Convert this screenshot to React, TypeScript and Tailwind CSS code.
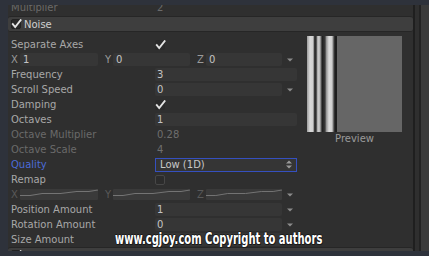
import React from "react";

function Arrow() {
  return (
    <div className="w-[15px] h-full flex items-center justify-center">
      <svg width="6" height="4" viewBox="0 0 6 4">
        <path d="M0 0.5 H6 L3 3.5 Z" fill="#8c8c8c" />
      </svg>
    </div>
  );
}

function CheckMark() {
  return (
    <svg width="11" height="10" viewBox="0 0 11 10" className="absolute left-0 top-0">
      <path d="M1.8 5.2 L4.2 8 L9.6 1.2" fill="none" stroke="#e2e2e2" strokeWidth="1.9" strokeLinecap="square" />
    </svg>
  );
}

function CheckBox({ checked, dim }: { checked?: boolean; dim?: boolean }) {
  return (
    <div
      className={
        "relative w-[10px] h-[10px] rounded-[2px] " +
        (dim ? "border border-[#474747] bg-[#2c2c2c]" : "bg-[#2a2a2a]")
      }
    >
      {checked ? <CheckMark /> : null}
    </div>
  );
}

function Field({ value, w, dim }: { value: string; w: string; dim?: boolean }) {
  return (
    <div className={"h-[13px] bg-[#363636] rounded-[2px] pl-[2px] flex items-center " + w}>
      <span className={dim ? "text-[#6e6e6e]" : "text-[#c4c4c4]"}>{value}</span>
    </div>
  );
}

function Row({
  label,
  dim,
  blue,
  children,
}: {
  label: string;
  dim?: boolean;
  blue?: boolean;
  children?: React.ReactNode;
}) {
  const color = blue ? "text-[#4b6bd8]" : dim ? "text-[#6a6a6a]" : "text-[#a8a8a8]";
  return (
    <div className="flex h-[15px] items-center">
      <div className={"w-[144px] whitespace-nowrap " + color}>{label}</div>
      <div className="w-[142px] h-full flex items-center">{children}</div>
    </div>
  );
}

function Curve() {
  return (
    <svg width="100%" height="11" viewBox="0 0 77 11" preserveAspectRatio="none">
      <polyline
        points="0,6.5 10,6.5 22,4.5 40,4.5 56,2.5 68,2.5 77,1"
        fill="none"
        stroke="#747474"
        strokeWidth="1"
      />
    </svg>
  );
}

function Triple({ curves }: { curves?: boolean }) {
  const lab = curves ? "text-[#595959]" : "text-[#9a9a9a]";
  const fieldCls = curves
    ? "h-[11px] bg-[#3a3a3a] rounded-[1px] flex items-center overflow-hidden"
    : "h-[13px] bg-[#363636] rounded-[2px] pl-[3px] flex items-center";
  const vals = ["1", "0", "0"];
  const labels = ["X", "Y", "Z"];
  const lw = ["w-[9px]", "w-[8px]", "w-[9px]"];
  const fw = ["w-[78px]", "w-[77px]", "w-[76px]"];
  return (
    <div className="flex h-[15px] items-center">
      {[0, 1, 2].map((i) => (
        <React.Fragment key={i}>
          <div className={"whitespace-nowrap " + lw[i] + " " + lab}>{labels[i]}</div>
          <div className={fieldCls + " " + fw[i]}>
            {curves ? <Curve /> : <span className="text-[#c4c4c4]">{vals[i]}</span>}
          </div>
          {i < 2 ? <div className="w-[7px]" /> : null}
        </React.Fragment>
      ))}
      <Arrow />
    </div>
  );
}

function Header({ label }: { label: string }) {
  return (
    <div className="h-[16px] shrink-0 bg-[#3e3e3e] border-y border-[#262626] rounded-[3px] flex items-center pl-[3px]">
      <div className="relative w-[10px] h-[10px] rounded-[2px] bg-[#2b2b2b] border border-[#222]">
        <svg width="11" height="10" viewBox="0 0 11 10" className="absolute -left-[1px] -top-[1px]">
          <path d="M1.8 5.2 L4.2 8 L9.6 1.2" fill="none" stroke="#e6e6e6" strokeWidth="1.9" strokeLinecap="square" />
        </svg>
      </div>
      <span className="ml-[3px] text-[#d0d0d0]">{label}</span>
    </div>
  );
}

export default function App() {
  return (
    <div className="relative w-[429px] h-[256px] bg-[#2e323b] pt-[5px] overflow-hidden font-['DejaVu_Sans',sans-serif] text-[10px] leading-[15px]">
      <div className="flex h-[246px]">
        <div className="w-[8px]" />
        <div className="w-[405px] h-full bg-[#2f2f2f] overflow-hidden flex flex-col">
          {/* Multiplier (cut off) */}
          <div className="h-[11px] overflow-hidden shrink-0">
            <div className="-mt-[5px] flex h-[15px] items-center pl-[3px]">
              <div className="w-[144px] text-[#6a6a6a]">Multiplier</div>
              <div className="pl-[2px] text-[#6a6a6a]">2</div>
            </div>
          </div>
          <Header label="Noise" />
          <div className="flex pt-[5px] shrink-0">
            <div className="w-[289px] pl-[3px] flex flex-col">
              <Row label="Separate Axes">
                <CheckBox checked />
              </Row>
              <Triple />
              <Row label="Frequency">
                <Field value="3" w="w-[142px]" />
              </Row>
              <Row label="Scroll Speed">
                <Field value="0" w="w-[127px]" />
                <Arrow />
              </Row>
              <Row label="Damping">
                <CheckBox checked />
              </Row>
              <Row label="Octaves">
                <Field value="1" w="w-[142px]" />
              </Row>
              <Row label="Octave Multiplier" dim>
                <span className="pl-[2px] text-[#6e6e6e]">0.28</span>
              </Row>
              <Row label="Octave Scale" dim>
                <span className="pl-[2px] text-[#6e6e6e]">4</span>
              </Row>
              <Row label="Quality" blue>
                <div className="w-[142px] h-[14px] border border-[#3550c0] bg-[#353535] flex items-center justify-between pl-[4px] pr-[4px]">
                  <span className="text-[#c8c8c8] leading-[12px]">Low (1D)</span>
                  <svg width="6" height="9" viewBox="0 0 6 9">
                    <path d="M0 3.5 L3 0.5 L6 3.5 Z M0 5.5 L3 8.5 L6 5.5 Z" fill="#9a9a9a" />
                  </svg>
                </div>
              </Row>
              <Row label="Remap">
                <CheckBox dim />
              </Row>
              <Triple curves />
              <Row label="Position Amount">
                <Field value="1" w="w-[127px]" />
                <Arrow />
              </Row>
              <Row label="Rotation Amount">
                <Field value="0" w="w-[127px]" />
                <Arrow />
              </Row>
              <Row label="Size Amount">
                <Field value="" w="w-[127px]" />
                <Arrow />
              </Row>
            </div>
            <div className="ml-[10px] -mt-[1px] flex flex-col items-center">
              <div className="flex w-[95px] h-[96px]">
                <div className="w-[30px] h-full bg-[linear-gradient(to_right,#9c9c9c_0px,#d9d9d9_3px,#d0d0d0_6px,#3a3a3a_7.5px,#2a2a2a_9px,#b0b0b0_10.5px,#d5d5d5_12px,#7a7a7a_14px,#1e1e1e_15px,#3a3a3a_18px,#9a9a9a_19.5px,#dcdcdc_22px,#cfcfcf_25px,#444444_27px,#1e1e1e_28px,#1e1e1e_30px)]" />
                <div className="flex-1 h-full bg-[#666666]" />
              </div>
              <div className="mt-[1px] text-[#9a9a9a] leading-[12px]">Preview</div>
            </div>
          </div>
          <Header label="Collision" />
        </div>
        <div className="flex h-full">
          <div className="w-[2px] bg-[#1f1f1f]" />
          <div className="w-[4px] bg-[#2f2f2f]" />
          <div className="w-[2px] bg-[#232323]" />
          <div className="w-[8px] bg-[#3b3b3b]" />
        </div>
      </div>
      <div className="absolute left-[115px] top-[230px] origin-left scale-x-[0.74] whitespace-nowrap font-['DejaVu_Sans_Condensed','DejaVu_Sans',sans-serif] font-bold text-[15px] leading-[18px] text-white [text-shadow:1px_1px_0_#1a1a1a,-1px_0_0_#1a1a1a,0_-1px_0_#1a1a1a,1px_0_0_#1a1a1a,0_1px_0_#1a1a1a]">
        www.cgjoy.com Copyright to authors
      </div>
    </div>
  );
}
